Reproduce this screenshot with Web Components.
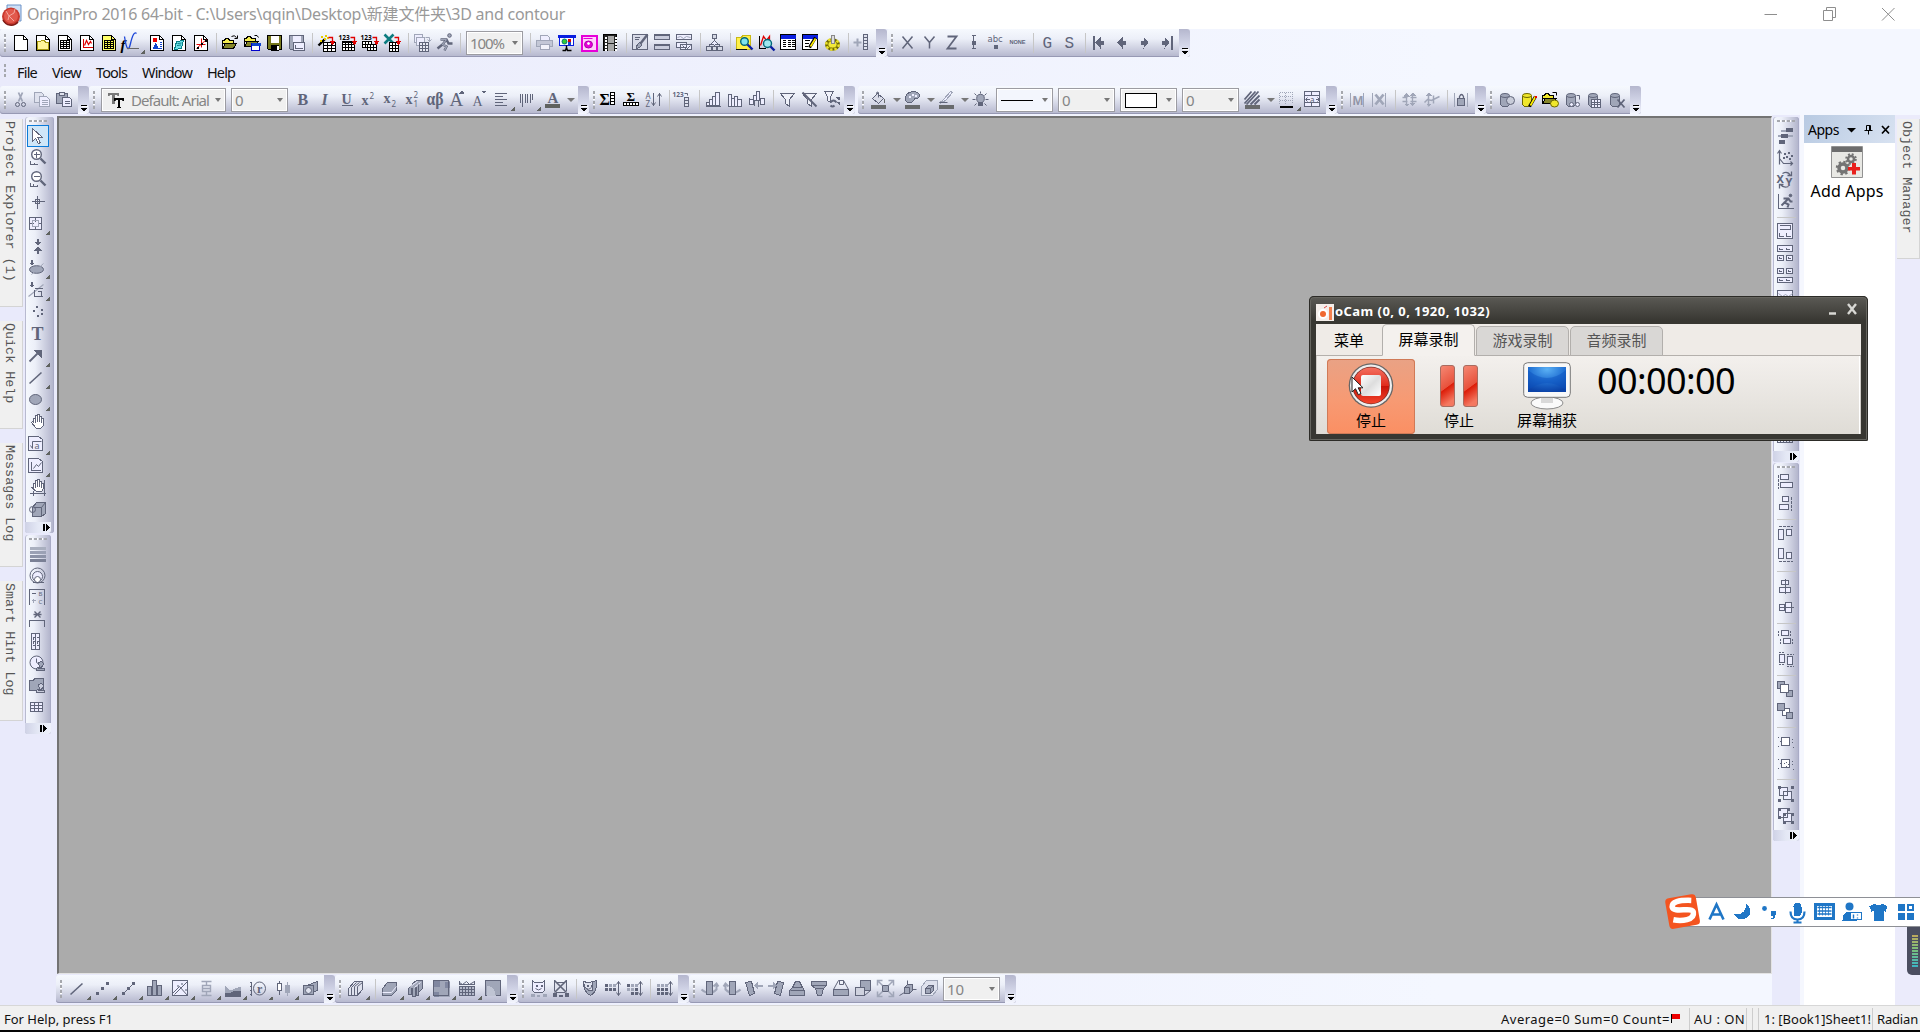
<!DOCTYPE html>
<html lang="en">
<head>
<meta charset="utf-8">
<title>OriginPro 2016 64-bit</title>
<style>
  html, body { margin: 0; height: 100%; overflow: hidden; }
  body { font-family: "Noto Sans", "Noto Sans CJK SC", sans-serif; }
</style>
</head>
<body>
<origin-window></origin-window>
<script>
const register = (name, clz) => {
  !customElements.get(name) && customElements.define(name, clz);
};

class Component extends HTMLElement {
  constructor() {
    super();
    this.attachShadow({ mode: "open" });
  }
  attr(name, fallback = "") {
    return this.getAttribute(name) ?? fallback;
  }
  connectedCallback() {
    this.shadowRoot.innerHTML = `<style>${this.constructor.styles}</style>${this.render()}`;
    this.onMount();
  }
  onMount() {}
  render() {
    return "<slot></slot>";
  }
}

// ---------------------------------------------------------------- icons
const INK = "#60657a";
const MID = "#a0a6b8";
const p = (d, s = INK, f = "none", w = 1) =>
  `<path d="${d}" stroke="${s}" fill="${f}" stroke-width="${w}"/>`;
const s = (d, c = INK, w = 1) => `<path class="s" d="${d}" stroke="${c}" fill="none" stroke-width="${w}"/>`;
const f = (d, c = INK) => `<path d="${d}" fill="${c}" stroke="none"/>`;
const e = (x, y, rx, ry, st = INK, fl = "none", w = 1) =>
  `<ellipse class="s" cx="${x}" cy="${y}" rx="${rx}" ry="${ry}" stroke="${st}" fill="${fl}" stroke-width="${w}"/>`;
const t = (x, y, size, str, extra = "") =>
  `<text x="${x}" y="${y}" font-size="${size}" fill="${INK}" stroke="none" ${extra}>${str}</text>`;
const grid = (x, y, c, r, cw, ch, st = "#000", fl = "#fff") => {
  let d = `M${x} ${y}h${c * cw}v${r * ch}h${-c * cw}z`;
  for (let i = 1; i < c; i++) d += `M${x + i * cw} ${y}v${r * ch}`;
  for (let i = 1; i < r; i++) d += `M${x} ${y + i * ch}h${c * cw}`;
  return p(d, st, fl);
};
const dots = (list, c = INK, z = 2) => f(list.map(([x, y]) => `M${x} ${y}h${z}v${z}h${-z}z`).join(""), c);
const page = (fl = "#fff") => p("M1 0H10L14 4V15H1Z", "#000", fl) + p("M10 0V4H14", "#000");
const folder = (x, y, c = "#f4ec50") => p(`M${x} ${y + 2}h2l1-2h3l1 2h4v3h-11z`, "#000", c) + p(`M${x} ${y + 10}v-8M${x} ${y + 10}l3-5h11l-3 5z`, "#000", "#85862a");
const redArrow = s("M9 2h4v5", "#e00000", 1.3) + f("M10 5.5h6l-3 4z", "#e00000");
const cyl = (c, st) => p("M1 3v9l2 2h5l2-2V3", st, c) + e(5.5, 3, 4.5, 2, st, c);
const serif = 'font-family="Liberation Serif" font-weight="bold"';
const boxes = (a, b, extra, fa = "none", fb = "none") => p(a, INK, fa) + p(b, INK, fb) + extra;
const lc = (x, y) => p(`M${x} ${y}h6v5h-6z`, INK, "#eef") + p(`M${x + 2} ${y + 1}v2h2`);

const ICONS = {
  new: page(),
  folder: page() + p("M2 6h3l1-1h3l1 2h3v7H2z", "#a89a10", "#fff59a"),
  book: page() + grid(3, 5, 3, 4, 3, 2) + p("M3 5h9", "#000"),
  graph: page() + p("M4 3v9h9", "#d00") + s("M5 10l2-5 2 4 2-3 1 2", "#d00", 1.2),
  matrix: page("#ffff6a") + grid(3, 5, 3, 4, 3, 2, "#000", "#ffff50"),
  func: t(-3, 14, 15, "<tspan fill='#000'>f</tspan>", 'font-family="Liberation Serif" font-style="italic" font-weight="bold"') +
    s("M1 1q3 20 6 7t6-10", "#1c46d8", 1.3) + p("M3 13h12", "#666"),
  layout: page() + dots([[3, 2]], "#e00", 4) + f("M3 13l3-6 3 6z", "#14c") + p("M10 7h2M10 9h2M10 11h2M3 13h9", "#14c"),
  notes: page() + p("M5 6l7-1-2 8-7 1z", "#087f86", "#6fe0e8") + s("M6 8l4-.5M5.500 10l4-.5", "#087f86"),
  fit: page() + s("M3 13L13 4M3 9h9M8 3v9", "#d00") + dots([[3, 11], [7, 7], [11, 4]], "#000"),
  open: folder(-1, 3) + s("M8 1q3-2 5 1M14 0v3h-3", "#000"),
  open2: folder(-1, 1) + s("M9 0q3-1 4 2", "#000") + p("M6 8h8v7H6z", "#00c", "#fff") + f("M6 7h9v3H6z", "#14c"),
  save: p("M0 0h14v14H1L0 13z", "#000", "#77791c") + f("M3 0h8v7H3z", "#fff") + f("M3 9h8v6H3z", "#000") + f("M9 10h2v4H9z", "#fff"),
  save2: p("M0 0h14v14H1L0 13z", INK, MID) + f("M3 0h8v6H3z", "#eef") + p("M4 7h11v8H4z", INK, "#eef") + p("M6 9v4h7", INK),
  wizard: s("M-1 10L6 3", "#000", 2.4) + dots([[1, 0], [5, -1], [0, 4], [7, 1], [4, 2]], "#e5cc00") + grid(4, 7, 3, 3, 4, 3) + redArrow,
  imp1: t(-3, 4, 6.500, "<tspan fill='#000'>123</tspan>", 'font-weight="bold"') + grid(1, 6, 4, 3, 3, 3) + p("M1 7h12", "#000") + redArrow,
  imp3: t(-3, 4, 6.500, "<tspan fill='#000'>123</tspan>", 'font-weight="bold"') + grid(-1, 6, 3, 2, 3, 3) + grid(4, 9, 3, 2, 3, 3) + redArrow,
  excel: s("M-1-1l9 9M8-1l-9 9", "#0c7c80", 2.6) + grid(4, 7, 3, 3, 3, 3) + redArrow,
  batch: p("M-1-1h8v8h-8z", MID, "#eef") + p("M1 2h8v8H1z", MID, "#eef") + grid(4, 7, 3, 3, 3, 3, INK, "#e8eaf4") + s("M10 2h4v4M12 4l2 2 2-2", MID),
  run: e(12, 0, 1.800, 1.800, INK, MID) + s("M9 4L5 9l4 2-2 4M5 9l-5 4M3 4l6 0 2 4h4", INK, 2.400) + s("M9 4L5 9l4 2-2 4M3 4h6", MID, 1.200),
  print: p("M3 5V0h7l2 2v3", MID, "#eef") + p("M-1 5h16v6H-1z", MID, "#c3c7d6") + p("M3 9h9v5H3z", MID, "#f2f3fa"),
  slide: f("M-2-1h18v3H-2z", "#0a1ee0") + p("M0 2h14v8H0z", "#0a1ee0", "#fff") + e(5, 6, 2.500, 2.500, "#077", "#3c3") + dots([[8, 3]], "#d00", 3) + dots([[8, 6]], "#14c", 3) + s("M7 10v3M3 15h3l1-3 1 3h4", "#000", 1.400),
  film: p("M0-1h13v16H0z", "#000", "#222") + f("M4 0h6v7H4zM4 8h6v7H4z", "#a8a8a8") + dots([[1, 1], [1, 4], [1, 7], [1, 10], [1, 13], [11, 1], [11, 4], [11, 7], [11, 10], [11, 13]], "#fff", 2),
  magenta: p("M0 0h15v15H0z", "#e600d8", "#ffd0fb", 2) + s("M2 3h9", "#e600d8") + e(7, 9, 4, 3.500, "#a0a", "#e600d8") + e(7, 8, 1, 1, "#fff", "#fff"),
  brush: p("M-1-1h15v15H-1z", INK, "#d8dbe8") + p("M1 2h5M1 4h4", INK) + s("M14-1L7 8", INK, 2.400) + p("M3 13q0-5 4-6 3 5-4 6z", INK, MID),
  tiles: p("M-1-1h15v5H-1zM-1 9h15v5H-1z", INK, "#c9ccdc") + p("M-1 0h15M-1 10h15"),
  tiles2: p("M-1-1h15v5H-1z", INK, "#eef") + s("M0 2l3-1 3 2 3-2 4 1", MID) + p("M-1 7h10v5H-1zM3 9h11v5H3z", INK, "#eef") + s("M5 10l4 4 4-4"),
  tree: p("M5-1h4v4H5zM-1 11h5v4h-5zM5 11h4v4H5zM10 11h5v4h-5z", INK, "#d5d8e4") + p("M7 3v8M2 11V9h10v2") + p("M4 8l3-3 3 3-3 2z", INK, "#eef"),
  find: p("M-1 2h5l1-2h8v14H-1z", "#c9b913", "#fff04a") + e(7, 6, 3.800, 3.800, "#067", "#7fe3ee", 1.400) + s("M10 9l5 5", "#0a1ea0", 2.400) + f("M-2 13h11v1H-2z", "#111"),
  findg: p("M0 0v13h6", "#000") + s("M1 10l3-9 3 4 3-4v4", "#d00", 1.300) + e(8, 8, 4, 4, "#067", "#9fe8ef", 1.400) + s("M11 11l4 4", "#0a1ea0", 2.400),
  table: p("M-1-1h15v15H-1z", "#000", "#fff") + f("M-1-1h15v4H-1z", "#0a1ee0") + p("M1 5h3M6 5h3M10 5h3M1 7h3M6 7h3M10 7h3M1 9h3M6 9h3M10 9h3M1 11h3M6 11h3M10 11h3", "#000"),
  table2: p("M-1-1h15v15H-1z", "#000", "#fff") + f("M-1-1h15v4H-1z", "#0a1ee0") + p("M1 5h5M1 8h4M1 11h3", "#000") + s("M12 2L6 12", "#000", 3.200) + s("M12 3L7 11", "#fe0", 1.600),
  gear: e(7, 9, 6, 4.800, "#6f6800", "none", 3) + `<g stroke-dasharray="2.400 1.800">${e(7, 9, 6, 5, "#e8df2c", "none", 3)}</g>` + e(7, 9, 4.500, 3.500, "#8b8400", "#f2e93a") + p("M6 0h3v8H6z", "#888", "#ddd"),
  addcol: s("M-2 7h8M2 3v8", MID, 2) + grid(8, -1, 1, 5, 4, 3, INK, "#dfe2ee"),
  X: s("M2 1l10 12M12 1L2 13", INK, 1.500), Y: s("M2 1l5 6 5-6M7 7v6", INK, 1.500), Z: s("M3 1h9L3 13h9", INK, 1.800),
  err: p("M5 0h4M5 13h4M7 0v13", INK) + dots([[5, 5]], INK, 4),
  abc: t(-1, 6, 8.500, "abc", 'font-family="DejaVu Sans"') + dots([[5, 9]], INK, 4),
  none: t(-1, 8, 5.600, "NONE", 'font-family="Liberation Sans" font-weight="bold" textLength="16"'),
  G: t(2, 12, 16, "G", 'font-family="Liberation Mono"'), S: t(2, 12, 16, "S", 'font-family="Liberation Mono"'),
  first: f("M0 0h2v14H0zM3 7l5-6v4h3v4H8v4z"), prev: f("M3 7l5-6v4h3v4H8v4z"),
  next: f("M12 7L7 1v4H4v4h3v4z"), last: f("M14 0h-2v14h2zM11 7L6 1v4H3v4h3v4z"),
  cut: s("M5 0l4 9M9 0L5 9", MID, 1.800) + e(4, 12, 2, 2, INK) + e(10, 12, 2, 2, INK),
  copy: p("M-1 0h7l2 2v8H-1z", MID, "#dfe2ee") + p("M4 4h7l3 3v7H4z", MID, "#eef") + p("M6 8h6M6 10h6M6 12h6", MID),
  paste: p("M-1 1h11v10H-1z", INK, MID) + p("M2 0h5v3H2z", INK, "#dfe2ee") + p("M5 5h7l2 2v7H5z", INK, "#eef") + p("M7 9h5M7 11h5", INK),
  B: t(2, 12, 16, "B", serif), I: t(4, 12, 16, "I", serif + ' font-style="italic"'),
  U: t(2, 11, 14, "U", serif) + p("M2 13h11"),
  sup: t(0, 12, 14, "x", serif) + t(8, 6, 8, "2"), sub: t(0, 10, 14, "x", serif) + t(8, 14, 8, "2"),
  supsub: t(0, 11, 14, "x", serif) + t(8, 5, 8, "2") + t(8, 14, 8, "1"),
  greek: t(-1, 12, 18, "αβ", serif + ' textLength="17" lengthAdjust="spacingAndGlyphs"'),
  Abig: t(0, 13, 19, "A", 'font-family="Liberation Serif"') + f("M10 1h5l-2.500-3z"),
  Asmall: t(1, 13, 14, "A", 'font-family="Liberation Serif"') + f("M10-2h5l-2.500 3z"),
  align: p("M1 1h12M1 4h8M1 7h12M1 10h8M1 13h12"),
  vbars: p("M1 1v9M3 1v13M6 1v9M8 1v9M11 1v9M13 1v6"),
  Acol: t(2, 10, 15, "A", serif) + f("M-1 11h15v4H-1z", "#60625f"),
  colstat: t(-3, 12, 16, "<tspan fill='#000'>Σ</tspan>", serif) + grid(8, 0, 1, 4, 4, 3, "#000") + p("M8 0h4v12h-4z", "#000"),
  rowstat: t(2, 8, 13, "<tspan fill='#000'>Σ</tspan>", serif) + grid(-1, 10, 5, 1, 3, 3),
  sort: t(-1, 6, 8, "A") + t(-1, 14, 8, "Z") + p("M7 0v13M13 0v13") + s("M5 10l2 3 2-3M11 4l2-3 2 3"),
  rank: t(-4, 4, 6.500, "123", 'font-weight="bold"') + grid(8, 5, 1, 3, 4, 3, INK, "#dfe2ee") + s("M8 1h3v2"),
  bars1: p("M0 13v-3h3v3zM3 13V7h3v6zM6 13V4h3v9zM9 13V0h4v13z", INK, "#eef") + p("M-1 14h15"),
  bars2: p("M0 14V2h3v12zM3 14V6h3v8zM6 14V4h3v10zM9 14V7h4v7z", INK, "#eef"),
  bars3: p("M-1 7h4v5h-4zM3 3h3v5H3zM6-1h3v9H6zM10 6h4v6h-4z", INK, "#eef") + p("M4 8v5M8 8v6M-1 5v2"),
  filter: p("M0 1h14L9 7v7l-4-3V7z", INK, "#f0f2fa"),
  filterx: p("M0 1h14L9 7v7l-4-3V7z", INK, "#f0f2fa") + s("M0 0l14 14", INK, 2),
  filterr: p("M0-1h9L6 4v6L3 8V4z", INK, "#f0f2fa") + s("M6 10q3-4 6 0M10 13q-2 2-4 0", INK, 2) + f("M10 4h5v4zM11 9h4v4z"),
  bucket: p("M1 6l5-5 6 5-5 5z", INK, "#d9dce8") + s("M5 2q0-4 2-2v5") + f("M12 5q3 4 1 6zM-1 12h15v4H-1z", "#686a6c"),
  palette: p("M0 6q0-6 7-7 7 0 7 5-2 3-5 2-1 4-5 4-4 0-4-4z", INK, MID) + dots([[3, 3], [6, 1], [9, 2]], "#eef", 2) + f("M-1 12h15v4H-1z", "#686a6c"),
  pen: p("M4 7l7-8 2 1-7 8-4 2z", MID, "#eef") + s("M2 9l-2 1h8") + f("M-1 12h15v4H-1z", "#686a6c"),
  bulb: e(7, 6, 3.800, 4.200, INK, MID) + p("M5 10h4v3H5z", INK, INK) + s("M7-1v2M-1 7h3M12 7h3M1 1l2 2M13 1l-2 2M1 13l2-2M13 13l-2-2"),
  hatch: s("M-1 7l7-8M-1 11L10-1M1 12L13-1M5 12l9-9M9 12l5-5", INK, 1.800) + f("M-1 12h15v4H-1z", "#686a6c"),
  borders: `<g stroke-dasharray="1 1">${p("M0 0h13v11M0 0v11M6 0v11M0 4h13M0 8h13", MID)}</g>` + f("M0 13h13v2H0z", "#000"),
  merge: p("M-1-1h15v15H-1zM-1 3h15M-1 10h15M6-1v4M6 10v4", INK, "#eef") + p("M0 7h4M10 7h4") + s("M2 5l-2 2 2 2M12 5l2 2-2 2") + t(4.500, 10, 8, "a"),
  maskM: p("M0 0v14M13 0v14", MID) + t(2, 12, 13, "M", 'font-family="Liberation Sans" font-weight="bold" fill-opacity=".6"'),
  maskX: p("M0 0v14M13 0v14", MID) + s("M3 2l8 10M11 2l-8 10", MID, 2.800),
  sp1: s("M4 1v12M10 1v12M0 5h5M0 9h5M8 5h6M8 9h6", MID, 1.300) + f("M4 0l3 4H1zM10 14l3-4H7zM4 14l3-3H1zM10 0l3 3H7z", MID),
  sp2: s("M0 10l3-3 4 1 8-4M4 1v13M9 3v8", MID, 1.500) + f("M1 3h6L4 0zM1 11h6l-3 3z", MID),
  lock: p("M0 0v14M13 0v14", MID) + s("M5 6V4q2-4 4 0v2", INK, 1.300) + p("M3 6h7v7H3z", INK, MID),
  db1: cyl(MID, INK) + e(11, 8, 4, 4, INK, "#c8ccd9"),
  db2: cyl("#f0e72b", "#6d6700") + s("M14 4L8 14", "#000", 3.200) + s("M14 4L9 13", "#fe0", 1.800) + dots([[13, 3]], "#e00"),
  db3: folder(-1, 1, "#f0e72b") + e(11, 11, 4, 3.500, "#6d6700", "#f0e72b") + s("M9 0h4v3", "#000"),
  db4: cyl(MID, INK) + s("M11 3h3v4", INK) + e(6, 12, 2, 2, INK, "#eef") + e(12, 12, 2, 2, INK, "#eef"),
  db5: cyl(MID, INK) + grid(4, 7, 3, 3, 3, 2.500, INK, "#eef"),
  db6: cyl(MID, INK) + s("M8 7l7 8M15 7l-7 8", INK, 1.800),
  // left side tools
  pointer: p("M2 0v13l3-3 3 5 2-1-3-5h5z", INK, "#fff"),
  zoomin: e(6, 4, 4.800, 4.800, INK, "#fff", 1.400) + p("M3 4h6M6 1v6") + s("M10 8l5 5", INK, 2.400) + p("M0 10v4h7M4 12v2"),
  zoomout: e(6, 4, 4.800, 4.800, INK, "#fff", 1.400) + p("M3 4h6") + s("M10 8l5 5", INK, 2.400) + p("M0 10v4h7v-2M3 11v3"),
  target: p("M7 1v13M1 7h13M5 5h4v4H5z"),
  region: p("M1 1h12v12H1z", INK, "#eef") + p("M1 7h4M9 7h4M7 1v4M7 9v4") + p("M4 4h6v6H4z", MID),
  inout: f("M6 0h2v3h3l-4 4-4-4h3zM6 15h2v-3h3L7 8l-4 4h3z"),
  ellm: e(8, 9, 7, 3.800, INK, MID) + f("M2-1h2v3h2L3 5 0 2h2z") + s("M3 14L15 3", MID),
  curm: s("M0 14L15 2", MID, 1.300) + f("M2-1h2v3h2L3 5 0 2h2z") + p("M6 6h8M6 7v7h8M9 9h4v4"),
  dots: dots([[5, 1], [10, 4], [2, 5], [10, 8], [6, 10]], INK, 2),
  T: t(1, 13, 18, "T", 'font-family="Liberation Serif" font-weight="bold"'),
  arrow: s("M1 13L10 4", INK, 1.800) + f("M4 1h9v9z"), line: s("M1 13L13 2", INK, 1.600),
  circ: e(7, 7, 6, 5, INK, MID),
  hand: p("M3 8V4l2 0v4V1h2v6V0h2v7V2h2v6V4h2v7l-3 3H6L1 8l1-1z", INK, "#fff"),
  eq: p("M0 0h10l4 3v11H0z", INK, "#eef") + s("M2 9l2 3V5h9", INK) + t(6, 12, 9, "a"),
  gr: p("M0 0h10l4 3v11H0z", INK, "#eef") + p("M3 3v9h9") + s("M5 10l3-4 2 2 3-4"),
  handax: p("M3 7V3l2 0v4V0h2v6V-1h2v7V1h2v6V3h2v5l-2 3H6L1 7z", INK, "#fff") + p("M-1 13h16M14-1v16M3 10v5"),
  box: p("M2 5l4-5h9v11l-4 3H2z", INK, MID) + s("M3 5h8v9M11 5l4-5") + e(2, 7, 3, 3),
  lines: f("M-1 0h16v3H-1z", "#a9afbf") + f("M-1 4h16v3H-1z", "#9ba1b5") + f("M-1 8h16v3H-1z", "#8d93a8") + f("M-1 12h16v3H-1z", "#7a8095"),
  rings: e(7, 7, 7.500, 7.500) + e(7, 8, 5, 5, INK, "#eef") + e(7, 11, 3, 3, INK, "#fff") + p("M2 14h11"),
  bc: p("M-1 14V-1h15v15") + p("M1 3h4") + p("M1 10h4M3 8v4", MID) + t(8, 5, 6, "B") + t(8, 13, 6, "C"),
  ast: s("M4-1l6 6M10-1l-6 6M3 2h8", INK, 1.400) + p("M-1 14V8h15v6"),
  scale: p("M1-1h8v16H1z", INK, "#eef") + p("M5-1v16M2 3h2M6 3h2M2 7h2M6 7h2M2 11h2M6 11h2M3 2v3M3 6v3M7 6v3"),
  clock: e(6, 6, 6.500, 6.500, INK, "#eef") + s("M6 2v4l3 2") + p("M8 12h6v2H6v-2l3-2-1-4 3-1 2 2-1 3z", INK, MID),
  stampf: p("M-1 2h4l1-2h9v12H-1z", INK, MID) + p("M8 12h6v2H6v-2l3-2-1-4 3-1 2 2-1 3z", INK, "#c9ccdc"),
  grid3: grid(0, 2, 3, 3, 4, 3, INK, "#eef"),
  // right side tools
  steps: f("M7-1h7v4H7zM2 5h7v4H2zM0 11h6v4H0z") + f("M2 1h5v2H2zM9 6h5v2H9zM-1 6h3v2h-3z", MID),
  axes3: s("M1 14V0M-1 3l2-3 2 3M1 8l4 5h9M12 11l2 2-2 2", INK, 1.200) + dots([[5, 2], [9, 1], [12, 4], [7, 5], [10, 7], [4, 6]], INK, 2),
  rotxy: t(-2, 10, 11, "X", 'font-weight="bold"') + t(7, 13, 11, "Y", 'font-weight="bold"') + s("M4 1q5-3 8 2M13-1v4H9M10 14q-5 2-8-2M1 16v-4h4", INK, 1.300),
  runner: p("M0-1v15h15", INK) + e(12, 1, 1.300, 1.300, INK, INK) + s("M10 4L6 8l4 2-1 3M6 8l-3 3M5 4h5l2 3h2", INK, 2),
  lay1: p("M-1-1h15v15H-1z", INK, "#eef") + p("M1 1h11v4H1") + p("M1 8v4h4M8 8v4h4"),
  lay2: p("M-1-1h15v6H-1z", INK, "#eef") + p("M1 1v2h3M8 1v2h3") + lc(-1, 9) + lc(8, 9),
  lay3: lc(-1, 0) + lc(8, 0) + p("M-1 9h15v5H-1z", INK, "#eef") + p("M1 10v2h3M8 10v2h3"),
  env: p("M-1 0h15v10H-1z", INK, "#eef") + s("M0 3l4 3 3-2 3 2 4-3", MID),
  ruler: p("M-1 0v12h15V0M2 9v3M5 9v3M8 9v3M11 9v3"),
  al1: boxes("M2 0h8v5H2z", "M2 8h12v5H2z", `<g stroke-dasharray="3 1">${p("M0 0v14")}</g>`, "#eef", "#eef"),
  al2: boxes("M4 0h6v5H4z", "M1 8h9v5H1z", `<g stroke-dasharray="3 1">${p("M13 0v14")}</g>`, "#eef", "#eef"),
  al3: boxes("M0 3h5v10H0z", "M8 3h5v6H8z", `<g stroke-dasharray="3 1">${p("M0 0h14")}</g>`, "#eef", "#eef"),
  al4: boxes("M0 0h5v10H0z", "M8 4h5v6H8z", `<g stroke-dasharray="3 1">${p("M0 13h14")}</g>`, "#eef", "#eef"),
  al5: boxes("M3 2h7v4H3z", "M1 9h11v5H1z", p("M7 0v15"), "#eef", "#eef"),
  al6: boxes("M1 4h5v6H1z", "M7 2h6v10H7z", p("M0 7h15"), "#eef", "#eef"),
  al7: boxes("M3 0h7v5H3z", "M5 8h7v5H5z", `<g stroke-dasharray="2 1">${p("M0 0v6M12 0v6M2 8v6M14 8v6")}</g>`, "#eef", "#eef"),
  al8: boxes("M1 2h5v8H1z", "M9 4h5v8H9z", `<g stroke-dasharray="2 1">${p("M0 0h6M0 12h6M8 2h7M8 14h7")}</g>`, "#eef", "#eef"),
  fr1: p("M-1-1h7v7h-7zM8 8h6v6H8z", INK, MID) + p("M2 2h8v8H2z", INK, "#fff"),
  fr2: p("M4 4h7v7H4z", INK, "#fff") + p("M-1-1h7v7h-7zM8 8h6v6H8z", INK, MID),
  sel1: p("M3 3h8v8H3z", INK, "#fff") + dots([[-1, 2], [1, 6], [-1, 11], [13, 4], [13, 7], [14, 12]], INK, 1),
  sel2: p("M3 3h8v8H3z", INK, "#fff") + dots([[-1, 2], [1, 6], [-1, 11], [13, 4], [13, 7], [14, 12], [5, 6], [9, 7], [7, 9], [7, 5]], INK, 1),
  gp1: p("M1 1h8v8H1zM5 5h8v8H5z", INK, "#eef") + dots([[-1, -1], [12, -1], [-1, 12], [12, 12]], INK, 3),
  gp2: p("M0 0h9v9H0zM5 5h8v8H5z", INK, "#eef") + dots([[-1, -1], [8, -1], [-1, 7], [4, 4], [12, 4], [4, 12], [12, 12]], INK, 3),
  // bottom tools
  sc: dots([[0, 10], [5, 5], [10, 0]], INK, 3),
  ls: s("M2 12L12 2") + dots([[0, 10], [5, 5], [10, 0]], INK, 3),
  cols: p("M0 14V5h4v9zM5 14V-1h4v15zM10 14V4h4v10z", INK, MID),
  mul: p("M-1-1h15v15H-1z", INK, "#eef") + s("M-1 12L6 5l8 9M14 0L1 13") + dots([[3, 3], [7, 1], [11, 7]], MID),
  boxp: s("M2 0h10M7 0v4M2 14h10M7 10v4M3 4h8v6H3zM3 7h8", MID, 1.400),
  area: f("M-1 15V4l4 4 3 1 3-2 6-2v10z", MID) + f("M-1 15v-4l5 1 5-3 6 1v5z"),
  polar: e(8, 7, 6, 6.500) + t(5.500, 11, 12, "r", serif) + p("M0 0v14M-2 1h2M-2 5h2M-2 9h2M-2 13h2"),
  ohlc: p("M0 2h4v7H0z", INK, "#fff") + p("M2-1v3M2 9v4") + p("M8 4h4v7H8z", MID, MID) + p("M10 0v14", MID),
  stack: p("M3 4l11-4v9L4 13z", INK, MID) + p("M0 4h10v9H0z", INK, MID) + e(5, 9, 3, 3, INK, "#dfe2ee"),
  d3bars: p("M0 7l6-7h8v8l-5 6H0z", INK, "#dfe2ee") + s("M3 14V6l5-5M6 14V5l5-4M9 14V5l5-4"),
  d3a: p("M0 7l5-6h9v8l-5 5H0z", INK, MID) + s("M0 11l9 0 5-6", "#eef"),
  d3b: p("M0 13V7l4-4v-1l4-3h6v8l-4 4v3H8V6H7v9H4V7H3v6z", INK, MID) + s("M2 5l7-5M6 6l6-5", "#eef") + s("M10 3v9"),
  heat: f("M-1-1h16v16H-1z", MID) + f("M-1-1h6v6h-6zM10 0h5v6h-5zM-1 10h5v5h-5z", "#8087a0") + p("M-1-1h15v15H-1z"),
  profile: grid(-1, 5, 5, 3, 3, 3, INK, "#b4b9ca") + p("M-1-1v4h15v-4") + s("M-1 1l3 2 4-3 3 3 5-3"),
  contour: p("M-1-1h15v15H-1z", INK, MID) + f("M0 4q9 1 9 10H0z", "#bfc4d3"),
  mask: p("M1-1l2 2h8l2-2v10l-2 2H3L1 9z", INK, "#eef") + dots([[4, 3], [9, 3]]) + s("M4 7q3 3 6 0") + f("M-1 12h4v3h-4zM5 13h3v2H5zM11 12h4v3h-4z", MID),
  maskOff: p("M1-1l2 2h8l2-2v10l-2 2H3L1 9z", INK, "#dfe2ee") + s("M1-1l12 12M13-1L1 11", INK, 1.600) + f("M-1 11h4v4h-4zM5 13h4v2H5zM11 11h4v4h-4z"),
  shield: p("M0 0q7 2 13-1 1 12-6 15Q0 11 0 0z", INK, MID) + p("M0 0q6 2 9 0v9Q1 10 0 0z", INK, "#dfe2ee") + dots([[3, 3], [7, 3]]) + s("M3 7q2 2 5-1"),
  mt1: dots([[-1, 2], [-1, 6], [3, 6], [7, 6]], INK, 3) + dots([[3, 2], [7, 2]], MID, 3) + s("M13 0v14M11 3l2-3 2 3M11 11l2 3 2-3"),
  mt2: dots([[-1, 2], [7, 6], [3, 10], [7, 10]], INK, 3) + dots([[3, 2], [7, 2], [-1, 6], [3, 6]], MID, 3) + s("M13 0v14M11 3l2-3 2 3M11 11l2 3 2-3"),
  mt3: dots([[-1, 6], [3, 6], [7, 6], [-1, 10], [3, 10], [7, 10]], INK, 3) + dots([[-1, 2], [3, 2], [7, 2]], MID, 3) + s("M13 0v14M11 3l2-3 2 3M11 11l2 3 2-3"),
  rot1: s("M-1 8q8 7 15 0V3M11 5l3-3 2 3", MID, 2) + p("M4 0h6v13H4z", INK, MID),
  rot2: s("M16 8q-8 7-15 0V3M-1 5l2-3 3 3", MID, 2) + p("M5 0h6v13H5z", INK, MID),
  tilt1: p("M-1 1l6-1 3 12-5 2z", INK, MID) + f("M7 4l4-4v3h5v2h-5v3z", MID),
  tilt2: p("M9 0l6 1-3 13-6-2z", INK, MID) + f("M8 4L4 0v3h-5v2h5v3z", MID),
  per1: p("M5 0h4l3 6 2 3v5H-1V9l3-3z", INK, MID) + s("M2 6h10M0 9h14", INK),
  per2: p("M-1 0h15v4l-3 3-2 7H5L3 7-1 4z", INK, MID) + s("M-1 4h15M3 7h8", INK),
  per3: p("M-1 8h15v6H-1z", INK, MID) + s("M-1 8L4-1h5l5 9M5-1v4h4v-4"),
  res1: p("M4-1h10v10H4z", INK, MID) + p("M-1 6h9v8h-9z", INK, "#cfd2df") + s("M14 9l-6 5"),
  res2: p("M4 4h6v6H4z", INK, MID) + s("M0 0l4 4M14 0l-4 4M0 14l4-4M14 14l-4-4M-1 4v-5h5M10-1h5v5M-1 10v5h5M10 15h5v-5", MID, 1.500),
  cube1: p("M4 6l3-3h5v6l-3 3H4z", INK, MID) + s("M7 3V-1M4 11l-5 3M12 8h4M4 6h5v6"),
  cube2: p("M-1 5l5-6h11v9l-5 6H-1z", MID, "#dfe2ee") + p("M3 7l3-3h5v5l-3 3H3z", INK, MID) + s("M3 7h5v5M8 7l3-3"),
  // input method icons, drawn in blue
  "ime-A": s("M0 15L7 0l7 15M3 10h8", "#1f76c6", 2.600),
  moon: f("M10-1q8 10-1 15-8 3-12-5 12 3 13-10z", "#1f76c6"),
  punct: e(1, 4, 2.400, 2.400, "none", "#1f76c6") + f("M7 6h5v4q0 4-4 5v-1q2-1 2-3H7z", "#1f76c6"),
  mic: f("M3 2q0-4 4-4t4 4v6q0 4-4 4T3 8z", "#1f76c6") + s("M0 7q0 8 7 8t7-8M7 15v3M3 18h8", "#1f76c6", 2.200),
  keys: p("M-2 0h18v14H-2z", "#1f76c6", "#fff", 2.400) + s("M0 3h14M0 6.500h14M0 9.500h14", "#1f76c6", 1.600) + s("M2 1v10M5 1v10M8 1v10M11 1v10", "#1f76c6", .8) + f("M0 11h14v1H0z", "#fff"),
  person: e(5, 2, 4, 4, "none", "#1f76c6") + f("M-2 16q0-9 7-9t8 9z", "#1f76c6") + p("M6 8h11v7H6z", "#1f76c6", "#fff") + s("M9 10v4M13 10v1M13 13v1", "#1f76c6", 1.400),
  shirt: f("M3-1q4 3 8 0l5 3-2 5-2-1v10H2V6L0 7l-2-5z", "#1f76c6"),
  apps: f("M-1-1h7v7h-7zM-1 8h7v7h-7zM8 8h7v7H8z", "#1f76c6") + p("M9 0h5v5H9z", "#1f76c6", "#fff", 2),
};

class ToolIcon extends Component {
  static styles = `
    :host { display: flex; flex: none; width: 22px; height: 22px; align-items: center; position: relative; }
    :host([mark="corner"]) { width: 26px; }
    :host([mark="arrow"]) { width: 34px; }
    :host([selected]) { background: #cfe6f8; box-shadow: inset 0 0 0 1px #0b7bd8; }
    svg { display: block; width: 16px; height: 16px; margin-left: 3px; overflow: visible; shape-rendering: crispEdges; font-family: "Noto Sans", sans-serif; }
    .s { shape-rendering: auto; }
    .corner { position: absolute; right: 1px; bottom: 0; width: 4px; height: 4px; background: linear-gradient(135deg, transparent 50%, #5f625f 50%); }
    .arrow { margin-left: 6px; border: 4px solid transparent; border-top-color: #777; border-bottom: 0; }
  `;
  render() {
    const mark = this.attr("mark");
    return `<svg viewBox="0 0 16 16"><g transform="translate(.5 .5)">${ICONS[this.attr("name")] || ""}</g></svg>
      ${mark ? `<i class="${mark}"></i>` : ""}`;
  }
}

class ToolSeparator extends Component {
  static styles = `
    :host { display: block; flex: none; width: 1px; height: 20px; margin: 0 3px 0 4px; background: #c6c6c6; border: 0; }
    :host([flat]) { width: 19px; height: 1px; margin: 4px 0 3px; }
  `;
}

class ToolBar extends Component {
  static styles = `
    :host { display: flex; flex: none; height: 28px; box-sizing: border-box; align-items: center; border-radius: 3px;
      background: linear-gradient(#f6f9fe, #eceff8 35%, #b4b6cd); box-shadow: inset 0 -1px #9799b4; }
    :host([vertical]) { flex-direction: column; width: 29px; height: auto; padding-right: 3px; background: linear-gradient(90deg, #f6f9fe, #eceff8 35%, #b0b2ca); box-shadow: inset 1px 0 #b8bad0, inset -1px 0 #a9abc6; }
    :host([narrow]) { width: 26px; padding-right: 0; }
    .grip { flex: none; width: 2px; height: 18px; margin: 0 4px; background: repeating-linear-gradient(#a6a8ae 0 3px, #fff 3px 4px, transparent 4px 5px); }
    :host([vertical]) .grip { width: 18px; height: 2px; margin: 3px 0; background: repeating-linear-gradient(90deg, #a6a8ae 0 3px, #fff 3px 4px, transparent 4px 5px); }
    .cap { flex: none; width: 11px; height: 28px; margin-left: auto; border-radius: 0 3px 3px 0; background: linear-gradient(#b5b7ce, #d5d8ea 60%, #f4f6fe); display: flex; align-items: flex-end; }
    :host([vertical]) .cap { box-sizing: border-box; width: 26px; height: 11px; margin: auto 0 0; border-radius: 0 0 3px 3px; background: linear-gradient(90deg, #cfd2e6, #e4e8f5 50%, #eef1fb); justify-content: flex-end; align-items: center; padding-right: var(--cap-inset, 0px); }
    .cap svg { display: block; width: 11px; height: 11px; shape-rendering: crispEdges; }
  `;
  render() {
    const mark = this.hasAttribute("vertical")
      ? `<path d="M3 2h2v7H3zM6 2l4 3.500L6 9z"/>`
      : `<path d="M3 2h6v1H3zM3 5h6L6 8.500z"/><path d="M4 3h6v1H4z" fill="#fff"/>`;
    return `<span class="grip"></span><slot></slot><span class="cap"><svg viewBox="0 0 11 11">${mark}</svg></span>`;
  }
}

class ComboBox extends Component {
  static styles = `
    :host { display: flex; flex: none; box-sizing: border-box; width: 57px; height: 24px; margin: 0 3px 0 2px; padding: 0 4px 0 3px; align-items: center;
      background: #f0f0f0; border: 1px solid #9c9ca2; box-shadow: inset 0 0 0 1px #fff; color: #858585; font-size: 15px; }
    i { margin-left: auto; border: 3.500px solid transparent; border-top: 4px solid #777; border-bottom: 0; }
  `;
  render() {
    return `<slot></slot><i></i>`;
  }
}

// Text that spreads its letters to occupy a given width.
class FitText extends Component {
  static styles = `
    :host { display: inline-block; white-space: pre; }
    span { display: inline-block; }
  `;
  render() {
    return "<span><slot></slot></span>";
  }
  onMount() {
    const span = this.shadowRoot.querySelector("span");
    const width = span.getBoundingClientRect().width;
    if (!width) return;
    span.style.letterSpacing = (this.attr("w") - width) / [...this.textContent].length + "px";
    this.style.width = this.attr("w") + "px";
  }
}

class TitleBar extends Component {
  static styles = `
    :host { display: flex; flex: none; height: 29px; background: #fff; color: #999; font-size: 16px; align-items: center; }
    .logo { width: 20px; height: 22px; margin: 0 5px 0 2px; }
    .title { line-height: 28px; margin-top: -1px; }
    .controls { margin-left: auto; display: flex; gap: 46px; padding-right: 25px; margin-top: -2px; }
    .controls svg { width: 13px; height: 13px; fill: none; stroke: #8e8e8e; overflow: visible; }
  `;
  render() {
    return `
      <svg class="logo" viewBox="0 0 20 22"><path d="M5 1h14v16H5z" fill="#cfe0f6" stroke="#6c93c8"/>
        <circle cx="9" cy="12.500" r="9" fill="#c8382d"/><circle cx="9" cy="12" r="7" fill="#e2594c"/>
        <path d="M4 7l3 5-1 4M7 12l5-3 1-4M7 12l5 5" fill="none" stroke="#f4a79e"/><path d="M1 16a9 9 0 0 0 15 2" fill="none" stroke="#7e1c17" stroke-width="1.500"/></svg>
      <fit-text class="title" w="538">OriginPro 2016 64-bit - C:\\Users\\qqin\\Desktop\\新建文件夹\\3D and contour</fit-text>
      <div class="controls">
        <svg><path d="M.5 7.500H13"/></svg>
        <svg><path d="M.5 3.500h9v10h-9zM3.500 3.500v-3h9v10h-3"/></svg>
        <svg><path d="M0 1l12.500 12.500M12.500 1L0 13.500"/></svg>
      </div>`;
  }
}

class MenuBar extends Component {
  static styles = `
    :host { display: flex; flex: none; height: 29px; align-items: center; gap: 15px; color: #111; font-size: 14.500px; }
    .grip { width: 2px; height: 15px; margin: 0 -5px 0 4px; background: repeating-linear-gradient(#a6a8ae 0 3px, transparent 3px 5px); }
  `;
  render() {
    return `<span class="grip"></span>
      <fit-text w="20" style="margin-left:1px">File</fit-text><fit-text w="29">View</fit-text><fit-text w="31">Tools</fit-text>
      <fit-text w="50">Window</fit-text><fit-text w="28">Help</fit-text>`;
  }
}

class SideTab extends Component {
  static styles = `
    :host { display: block; box-sizing: border-box; width: 23px; background: #f0f0f0; border: solid #d4d4d4; border-width: 0 1px 1px 0; color: #555;
      writing-mode: vertical-rl; font: 13.400px/19px "Liberation Mono", monospace; padding: 2px 3px 0 0; }
  `;
}

class AppsPanel extends Component {
  static styles = `
    :host { display: flex; flex-direction: column; width: 91px; background: #fff; color: #000; align-items: center; }
    header { display: flex; box-sizing: border-box; width: 91px; height: 28px; align-items: center; padding: 0 5px 0 4px; font-size: 14px; background: linear-gradient(120deg, #b8cae2, #d8e2f1); }
    header svg { width: 11px; height: 11px; margin-left: 6px; overflow: visible; }
    .app { width: 32px; height: 32px; margin: 3px 5px 0 0; }
    .name { font-size: 16px; line-height: 24px; margin: 1px 5px 0 0; }
  `;
  render() {
    return `
      <header><fit-text w="31">Apps</fit-text>
        <svg style="margin-left:7px"><path d="M1 4h9L5.500 8.500z"/></svg>
        <svg style="margin-left:6px"><path d="M3.500 1.500h4v5h-4zM1.500 6.500h8M5.500 6.500v4M6.500 2v4" fill="none" stroke="#000"/></svg>
        <svg><path d="M2 2l7 7.500M9 2L2 9.500" stroke="#000" stroke-width="1.700"/></svg>
      </header>
      <svg class="app" viewBox="0 0 32 32"><path d="M.5.500h31v31H.5z" fill="#e8e8e4" stroke="#929292"/><path d="M1 1h30v5H1z" fill="#6d6d6d"/>
        <g fill="none" stroke="#747474"><circle cx="12" cy="22" r="4" stroke-width="3.500"/><circle cx="12" cy="22" r="6.200" stroke-width="2" stroke-dasharray="2.400 2.400"/>
        <circle cx="20" cy="13" r="3" stroke-width="2.500"/><circle cx="20" cy="13" r="4.800" stroke-width="2" stroke-dasharray="1.900 1.900"/></g>
        <path d="M21 17h4v4h4v3.500h-4v4h-4v-4h-4V21h4z" fill="#e8201c"/></svg>
      <fit-text class="name" w="73">Add Apps</fit-text>`;
  }
}

class StatusBar extends Component {
  static styles = `
    :host { display: flex; flex: none; box-sizing: border-box; height: 25px; padding-top: 1px; background: #f0f0f0; border-top: 1px solid #d7d7d7; align-items: center; color: #111; font-size: 13px; }
    .help { margin-left: 4px; margin-right: auto; }
    b { width: 1px; height: 22px; background: #cdcdcd; }
    svg { width: 9px; height: 9px; margin: 0 9px 0 1px; }
  `;
  render() {
    return `<fit-text class="help" w="109">For Help, press F1</fit-text>
      <fit-text w="169">Average=0 Sum=0 Count=</fit-text><svg><path d="M0 0h9v5H1v4H0z" fill="#e00"/><path d="M0 0h1v9H0z"/></svg><b></b>
      <fit-text w="51" style="margin-left:4px">AU : ON</fit-text><b style="margin-left:1px"></b><b style="margin-left:5px"></b><b style="margin-left:5px"></b>
      <fit-text w="107" style="margin-left:5px">1: [Book1]Sheet1!</fit-text><b style="margin-left:1px"></b>
      <fit-text w="41" style="margin:0 2px 0 4px">Radian</fit-text>`;
  }
}

class OcamButton extends Component {
  static styles = `
    :host { display: flex; flex-direction: column; box-sizing: border-box; width: 88px; height: 75px; align-items: center; border-radius: 4px; font-size: 15px; }
    :host([active]) { background: linear-gradient(#e9a285, #f79a73 55%, #fb8f63); box-shadow: inset 0 0 0 1px #d07a57; }
    .art { height: 50px; margin-top: 3px; }
    .label { line-height: 17px; margin-top: 0; }
  `;
  render() {
    return `<div class="art"><slot name="art"></slot></div><div class="label"><slot></slot></div>`;
  }
}

class OcamWindow extends Component {
  static styles = `
    :host { display: flex; flex-direction: column; box-sizing: border-box; width: 559px; height: 145px; padding: 0 7px 7px; border-radius: 5px 5px 2px 2px;
      background: linear-gradient(#5c5b56, #383732 25px); box-shadow: inset 0 0 0 1px #2c2b27, inset 0 0 0 2px #66655f; }
    header { display: flex; height: 28px; align-items: center; color: #fff; font-weight: bold; font-size: 13px; box-sizing: border-box; }
    header .ico { width: 18px; height: 17px; margin-right: 1px; margin-top: 4px; }
    header .ctl { width: 31px; height: 14px; margin-left: auto; margin-right: 2px; margin-top: -3px; }
    header fit-text { margin-top: 1px; }
    nav { display: flex; height: 32px; align-items: flex-end; background: #efebe7; box-shadow: inset 0 -1px #b4b0ac; font-size: 15px; }
    nav span { box-sizing: border-box; height: 30px; line-height: 27px; text-align: center; width: 93px; margin-right: 1px; border: 1px solid #b2afac; border-radius: 5px 5px 0 0; background: #d9d7d5; color: #555; }
    nav .menu { width: 66px; margin: 0; border-color: transparent; background: none; color: #000; }
    nav .on { height: 32px; line-height: 29px; background: #f4f1ee; border-bottom-color: #f4f1ee; color: #000; }
    main { display: flex; flex: 1; box-sizing: border-box; padding: 3px 0 0 11px; background: linear-gradient(#f3f0ed, #dfdcd6); box-shadow: inset 1px 0 #cfcbc6, inset -1px 0 #cfcbc6, inset -2px 0 #fff; overflow: hidden; }
    .time { font-size: 36px; line-height: 40px; margin-left: 6px; margin-top: 2px; color: #000; }
    .pointer { position: absolute; left: 42px; top: 80px; }
    svg { display: block; overflow: visible; }
  `;
  render() {
    return `
      <header>
        <svg class="ico" viewBox="0 0 18 17"><path d="M0 0h18v17H0z" fill="#f4eeea"/><circle cx="7" cy="10" r="5" fill="#fff"/><circle cx="7" cy="10" r="3" fill="#f06830"/><path d="M13 3h3v13h-3z" fill="#f28050"/><path d="M8 4l3-2" stroke="#d44"/></svg>
        <fit-text w="155">oCam (0, 0, 1920, 1032)</fit-text>
        <svg class="ctl" viewBox="0 0 31 14"><path d="M1 11.500h7M20 2l8 10M28 2l-8 10" stroke="#d8d8d4" stroke-width="2.400" fill="none"/></svg>
      </header>
      <nav><span class="menu">菜单</span><span class="on">屏幕录制</span><span>游戏录制</span><span>音频录制</span></nav>
      <main>
        <ocam-button active>
          <svg slot="art" width="46" height="46" viewBox="0 0 46 46">
            <defs><linearGradient id="r" x2="0" y2="1"><stop offset="0" stop-color="#f47060"/><stop offset=".5" stop-color="#e02c1c"/><stop offset=".52" stop-color="#c81408"/><stop offset="1" stop-color="#f4442c"/></linearGradient>
            <linearGradient id="w" x2="1" y2="1"><stop offset="0" stop-color="#fff"/><stop offset=".5" stop-color="#ddd"/><stop offset="1" stop-color="#fff"/></linearGradient></defs>
            <circle cx="23" cy="23.500" r="22.300" fill="#666"/><circle cx="23" cy="23.500" r="21" fill="#eee"/><circle cx="23" cy="23.500" r="18.800" fill="#7b3029"/><circle cx="23" cy="23.500" r="18" fill="url(#r)"/>
            <rect x="13" y="13" width="20" height="21" rx="2" fill="url(#w)"/></svg>停止
        </ocam-button>
        <ocam-button>
          <svg slot="art" width="38" height="44" viewBox="0 0 38 44">
            <defs><linearGradient id="q" x2=".25" y2="1"><stop offset="0" stop-color="#f58a75"/><stop offset=".6" stop-color="#e8523c"/><stop offset=".62" stop-color="#dc1c08"/><stop offset="1" stop-color="#f47860"/></linearGradient></defs>
            <rect x=".5" y="3.500" width="14" height="41" rx="2.500" fill="url(#q)" stroke="#a86c60"/><rect x="23.500" y="3.500" width="14" height="41" rx="2.500" fill="url(#q)" stroke="#a86c60"/></svg>停止
        </ocam-button>
        <ocam-button>
          <svg slot="art" width="48" height="48" viewBox="0 0 48 48">
            <defs><radialGradient id="b" cy=".1" r=".9"><stop offset="0" stop-color="#5ab0f4"/><stop offset=".5" stop-color="#2272d4"/><stop offset="1" stop-color="#0b43a8"/></radialGradient></defs>
            <ellipse cx="24" cy="41" rx="16" ry="6" fill="#fafafa" stroke="#8b8b8b"/><path d="M18 35h12v6H18z" fill="#d9d9d9"/>
            <rect x=".7" y=".7" width="46.600" height="34.600" rx="4" fill="#f8f8f8" stroke="#777"/><path d="M5 5h38v25H5z" fill="url(#b)"/>
            <path d="M5 8q19 16 38 0v20q-19-14-38 0z" fill="#0b4fbc" opacity=".45"/></svg>屏幕捕获
        </ocam-button>
        <fit-text class="time" w="138">00:00:00</fit-text>
      </main>
      <svg class="pointer" width="13" height="20"><path d="M1 1v15l3.500-3.300 2.800 6 2.700-1.200-2.800-5.700H12z" fill="#fff" stroke="#222"/></svg>`;
  }
}

class ImeBar extends Component {
  static styles = `
    :host { display: flex; box-sizing: border-box; width: 238px; height: 30px; align-items: center; background: #fff; border: solid #8e9096; border-width: 1px 0; padding-left: 24px; }
    .logo { position: absolute; left: -18px; top: -6px; width: 38px; height: 38px; }
    tool-icon { width: 27px; }
  `;
  render() {
    return `
      <svg class="logo" viewBox="0 0 38 38"><g transform="rotate(-10 19 19)"><rect x="3" y="4" width="31" height="31" rx="4" fill="#f4541f"/>
        <path d="M29 10q-19-4-20 3c0 7 20 3 20 9 0 8-13 7-21 4" fill="none" stroke="#fff" stroke-width="5.500"/></g></svg>
      ${["ime-A", "moon", "punct", "mic", "keys", "person", "shirt", "apps"].map((n) => `<tool-icon name="${n}"></tool-icon>`).join("")}`;
  }
}

// Tool lists: "|" is a separator, a trailing "+" adds the corner mark, ">" the drop arrow.
const tools = (list, flat) =>
  list.split(" ").map((n) => {
    if (n === "|") return `<tool-separator ${flat ? "flat" : ""}></tool-separator>`;
    const mark = n.endsWith("+") ? "corner" : n.endsWith(">") ? "arrow" : "";
    return `<tool-icon name="${n.replace(/[+>]$/, "")}" ${mark ? `mark="${mark}"` : ""}></tool-icon>`;
  }).join("");

const column = (list) => tools(list, true).replaceAll('mark="corner"', 'mark="corner" style="width:22px;--x:-4px"');

class OriginWindow extends Component {
  static styles = `
    :host { display: flex; flex-direction: column; width: 1920px; height: 1032px; background: linear-gradient(90deg, #e9eafb, #f4f7ff 75%); overflow: hidden; position: relative; }
    .row { display: flex; flex: none; height: 28px; }
    .work { display: flex; flex: 1; min-height: 0; margin-top: 1px; }
    .tabs { display: flex; flex-direction: column; width: 25px; gap: 14px; padding-top: 4px; box-sizing: border-box; background: #e9eafb; }
    .tabs.right { padding-left: 2px; background: #ebebfb; }
    .strip { width: 31px; display: flex; flex-direction: column; gap: 2px; padding-top: 2px; box-sizing: border-box; background: #e9eafb; --cap-inset: 3px; }
    .strip.right { width: 32px; padding-left: 1px; gap: 1px; box-shadow: inset -4px 0 #f5f7fe; --cap-inset: 1px; }
    .centre { display: flex; flex-direction: column; flex: 1; min-width: 0; }
    .mdi { flex: 1; box-sizing: border-box; margin: 1px 0 0 1px; background: #ababab; border: solid; border-width: 2px 1px 1px 2px; border-color: #737373 #e3e3e3 #e3e3e3 #737373; }
    .bottom { margin: 1px 0 2px; }
    .edge { flex: none; height: 2px; background: #050505; }
    ocam-window { position: absolute; left: 1309px; top: 296px; }
    ime-bar { position: absolute; left: 1682px; top: 897px; }
    .meter { position: absolute; right: 0; top: 926px; width: 13px; height: 49px; border-radius: 0 0 0 5px; background: #4b4e60; }
    .meter::after { content: ""; display: block; width: 6px; height: 34px; margin: 8px 0 0 5px; background: repeating-linear-gradient(#4b4e60 0 1px, transparent 1px 3px), linear-gradient(#c3a65a, #7bc07a 45%, #38b4c8); }
    .line, .rect { display: block; width: 32px; margin-left: 1px; }
    .line { height: 1px; background: #000; }
    .rect { box-sizing: border-box; height: 15px; background: #fff; border: 1px solid #000; }
    .tt { width: 16px; height: 16px; margin: 0 7px 0 3px; overflow: visible; }
  `;
  render() {
    return `
      <title-bar></title-bar>
      <div class="row">
        <tool-bar style="width:887px">${tools("new folder book graph matrix func+ layout notes fit | open open2 save save2 | wizard imp1 imp3 excel | batch run |")}
          <combo-box><fit-text w="34">100%</fit-text></combo-box>${tools("| print slide magenta film | brush tiles tiles2 | tree | find findg table table2 gear | addcol")}</tool-bar>
        <tool-bar style="width:303px">${tools("X Y Z err abc none | G S | first prev next last")}</tool-bar>
      </div>
      <menu-bar></menu-bar>
      <div class="row">
        <tool-bar style="width:89px">${tools("cut copy paste")}</tool-bar>
        <tool-bar style="width:500px"><combo-box style="width:125px">
          <svg class="tt" viewBox="0 0 16 16"><path d="M0 1h11v3H9.500L9 3H7v9H4V3H2L1.500 4H0z" fill="#777"/><path d="M6 6h10v3h-1.500L14 8h-2v7h1v1H9v-1h1V8H8l-.5 1H6z" fill="#000"/></svg>
          <fit-text w="78">Default: Arial</fit-text></combo-box><combo-box style="margin-right:4px">0</combo-box>
          ${tools("B I U sup sub supsub greek Abig Asmall align+ vbars+ Acol>")}</tool-bar>
        <tool-bar style="width:266px">${tools("colstat rowstat sort | rank | bars1 bars2 bars3 | filter filterx filterr")}</tool-bar>
        <tool-bar style="width:479px;margin-left:3px">${tools("bucket> palette> pen> bulb")}
          <combo-box style="margin-left:4px;background:#f3f6fd"><span class="line"></span></combo-box><combo-box>0</combo-box>
          <combo-box><span class="rect"></span></combo-box><combo-box>0</combo-box>${tools("hatch> borders+ merge")}</tool-bar>
        <tool-bar style="width:149px">${tools("maskM maskX | sp1 sp2 | lock")}</tool-bar>
        <tool-bar style="width:155px">${tools("db1 db2 db3 db4 db5 db6")}</tool-bar>
      </div>
      <div class="work">
        <div class="tabs">
          <side-tab style="height:188px">Project Explorer (1)</side-tab>
          <side-tab style="height:108px">Quick Help</side-tab>
          <side-tab style="height:124px">Messages Log</side-tab>
          <side-tab style="height:140px">Smart Hint Log</side-tab>
        </div>
        <div class="strip">
          <tool-bar vertical style="height:416px;--cap-inset:0px"><tool-icon name="pointer" selected></tool-icon>${tools("zoomin zoomout target region+ inout ellm+ curm+ dots T arrow+ line+ circ+ hand eq+ gr+ handax box")}</tool-bar>
          <tool-bar vertical narrow style="height:199px">${tools("lines rings bc ast scale clock stampf grid3")}</tool-bar>
        </div>
        <div class="centre">
          <div class="mdi"></div>
          <div class="row bottom">
            <tool-bar style="width:279px">${tools("line+ sc+ ls+ cols+ mul+ boxp+ area+ polar+ ohlc+ stack")}</tool-bar>
            <tool-bar style="width:183px">${tools("d3bars+ | d3a+ d3b+ heat+ profile+ contour")}</tool-bar>
            <tool-bar style="width:171px">${tools("mask maskOff | shield mt1 mt2 | mt3")}</tool-bar>
            <tool-bar style="width:327px">${tools("rot1 rot2 tilt1 tilt2 per1 per2 per3 res1 res2 cube1 cube2")}<combo-box>10</combo-box></tool-bar>
          </div>
        </div>
        <div class="strip right">
          <tool-bar vertical narrow style="height:345px">${tools("steps axes3 rotxy runner | lay1 lay2 lay3 env | lay1 lay2 lay3 env lay1 ruler", true)}</tool-bar>
          <tool-bar vertical narrow style="height:378px">${tools("al1 al2 | al3 al4 | al5 al6 | al7 al8 | fr1 fr2 | sel1 sel2 | gp1 gp2", true)}</tool-bar>
        </div>
        <apps-panel></apps-panel>
        <div class="tabs right"><side-tab style="height:140px">Object Manager</side-tab></div>
      </div>
      <status-bar></status-bar>
      <div class="edge"></div>
      <div class="meter"></div>
      <ocam-window></ocam-window>
      <ime-bar></ime-bar>`;
  }
}

register("origin-window", OriginWindow);
register("title-bar", TitleBar);
register("menu-bar", MenuBar);
register("tool-bar", ToolBar);
register("tool-separator", ToolSeparator);
register("combo-box", ComboBox);
register("tool-icon", ToolIcon);
register("side-tab", SideTab);
register("apps-panel", AppsPanel);
register("status-bar", StatusBar);
register("ocam-window", OcamWindow);
register("ocam-button", OcamButton);
register("ime-bar", ImeBar);
register("fit-text", FitText);
</script>
</body>
</html>
